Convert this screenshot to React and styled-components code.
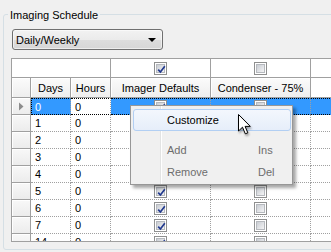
import React from "react";
import styled, { createGlobalStyle } from "styled-components";

const GlobalStyle = createGlobalStyle`
  html, body {
    margin: 0;
    padding: 0;
  }
  body {
    background: #f0f0f0;
    font-family: "Liberation Sans", Arial, sans-serif;
    font-size: 11px;
    color: #000;
    overflow: hidden;
  }
`;

/* ---------- window + group box ---------- */

const Window = styled.div`
  position: relative;
  width: 331px;
  height: 252px;
  overflow: hidden;
  padding-top: 14px;
  box-sizing: border-box;
`;

const GroupBox = styled.section`
  margin-left: 3px;
  width: 360px;
  height: 236px;
  box-sizing: border-box;
  border: 1px solid #d5dfe5;
  border-radius: 3px;
  padding: 0 0 0 8px;
  display: flex;
  flex-direction: column;
  align-items: flex-start;
`;

const GroupTitle = styled.div`
  margin: -7px 0 0 -4px;
  padding: 0 2px;
  line-height: 15px;
  background: #f0f0f0;
  color: #000;
`;

/* ---------- combo box ---------- */

const Combo = styled.div`
  margin-top: 6px;
  width: 151px;
  height: 21px;
  box-sizing: border-box;
  border: 1px solid #707070;
  border-radius: 3px;
  background: linear-gradient(#f2f2f2 0%, #ebebeb 50%, #dddddd 51%, #d6d6d6 100%);
  box-shadow: inset 0 0 0 1px rgba(255, 255, 255, 0.55);
  display: flex;
  align-items: center;
  padding: 0 6px 0 3px;
  justify-content: space-between;
`;

const ComboArrow = styled.span`
  width: 0;
  height: 0;
  border-left: 4px solid transparent;
  border-right: 4px solid transparent;
  border-top: 4px solid #000;
`;

/* ---------- data grid ---------- */

const Grid = styled.div`
  margin: 8px 0 0 -1px;
  width: 330px;
  height: 184px;
  box-sizing: border-box;
  border: 1px solid #a0a0a0;
  background: #fff;
  overflow: hidden;
  display: grid;
  grid-template-columns: 19px 40px 40px 100px 100px 1fr;
  grid-template-rows: 19px 20px repeat(9, 17px);
`;

const TopCell = styled.div`
  grid-column: span ${(p) => p.span || 1};
  background: #fff;
  border-right: 1px solid #a0a0a0;
  border-bottom: 1px solid #a0a0a0;
  display: flex;
  align-items: center;
  justify-content: center;
`;

const HeaderCell = styled.div`
  background: linear-gradient(#fbfbfb, #eeeeee);
  border-right: 1px solid #a0a0a0;
  border-bottom: 1px solid #a0a0a0;
  box-shadow: inset 1px 1px 0 #fff;
  display: flex;
  align-items: center;
  justify-content: center;
  white-space: nowrap;
  ${(p) => p.blank && "background: #fff; box-shadow: none;"}
`;

const RowHeader = styled.div`
  background: linear-gradient(#f8f8f8, #ececec);
  border-right: 1px solid #a0a0a0;
  border-bottom: 1px solid #a0a0a0;
  box-shadow: inset 1px 1px 0 #fff;
  display: flex;
  align-items: center;
  justify-content: center;
`;

const Cell = styled.div`
  box-sizing: border-box;
  background: ${(p) => (p.selected ? "#3399ff" : "#fff")};
  color: ${(p) => (p.selected ? "#fff" : "#000")};
  border-right: 1px dotted #a0a0a0;
  border-bottom: 1px dotted ${(p) => (p.focused ? "#000" : "#a0a0a0")};
  border-top: ${(p) => (p.focused ? "1px dotted #000" : "none")};
  border-left: ${(p) => (p.focusStart ? "1px dotted #000" : "none")};
  display: flex;
  align-items: center;
  justify-content: ${(p) => (p.center ? "center" : "flex-start")};
  padding-left: ${(p) => (p.center ? 0 : p.focusStart ? 3 : 4)}px;
  white-space: nowrap;
`;

const CheckBox = styled.span`
  width: 13px;
  height: 13px;
  box-sizing: border-box;
  border: 1px solid #8e8f8f;
  background: #fff;
  padding: 2px;
  position: relative;
  flex: none;

  &::before {
    content: "";
    display: block;
    width: 7px;
    height: 7px;
    border: 1px solid #b6b9be;
    background: linear-gradient(135deg, #c9cdd3, #f4f4f5);
    box-sizing: content-box;
    margin: -1px;
  }

  svg {
    position: absolute;
    left: 1px;
    top: 1px;
  }
`;

function Check({ checked }) {
  return (
    <CheckBox>
      {checked && (
        <svg width="11" height="11" viewBox="0 0 11 11">
          <path
            d="M2.2 5.6 L4.4 8 L8.8 2.2"
            fill="none"
            stroke="#21398e"
            strokeWidth="1.7"
          />
        </svg>
      )}
    </CheckBox>
  );
}

/* ---------- context menu ---------- */

const Menu = styled.div`
  position: absolute;
  left: 130px;
  top: 105px;
  width: 163px;
  box-sizing: border-box;
  padding: 3px 1px 1px 2px;
  border: 1px solid #979797;
  background:
    linear-gradient(90deg, transparent 29px, #e2e3e3 29px, #e2e3e3 30px, #fff 30px, #fff 31px, transparent 31px),
    #f0f0f0;
  box-shadow: 3px 3px 3px rgba(0, 0, 0, 0.35);
  font-size: 11px;
`;

const MenuItem = styled.div`
  height: 22px;
  box-sizing: border-box;
  display: grid;
  grid-template-columns: 91px auto;
  align-items: center;
  padding-left: 33px;
  border: 1px solid transparent;
  border-radius: 3px;
  color: ${(p) => (p.disabled ? "#6d6d6d" : "#000")};
  ${(p) =>
    p.hover &&
    `
    border-color: #b2cff3;
    background: linear-gradient(#f3f7fd, #e6eefa);
  `}
`;

const MenuGap = styled.div`
  height: 8px;
`;

const Cursor = styled.svg`
  position: absolute;
  left: 238px;
  top: 114px;
  filter: drop-shadow(1px 2px 1px rgba(0, 0, 0, 0.35));
`;

const rows = [0, 1, 2, 3, 4, 5, 6, 7, 14];

export default function App() {
  return (
    <Window>
      <GlobalStyle />
      <GroupBox>
        <GroupTitle>Imaging Schedule</GroupTitle>
        <Combo>
          <span>Daily/Weekly</span>
          <ComboArrow />
        </Combo>
        <Grid>
          <TopCell span={3} />
          <TopCell>
            <Check checked />
          </TopCell>
          <TopCell>
            <Check />
          </TopCell>
          <TopCell />

          <HeaderCell />
          <HeaderCell>Days</HeaderCell>
          <HeaderCell>Hours</HeaderCell>
          <HeaderCell>Imager Defaults</HeaderCell>
          <HeaderCell>Condenser - 75%</HeaderCell>
          <HeaderCell blank />

          {rows.map((day, i) => {
            const sel = i === 0;
            return (
              <React.Fragment key={day}>
                <RowHeader>
                  {sel && (
                    <svg width="6" height="9" viewBox="0 0 6 9">
                      <path d="M1 0.5 L5.5 4.5 L1 8.5 Z" fill="#8c8c8c" />
                    </svg>
                  )}
                </RowHeader>
                <Cell selected={sel} focused={sel} focusStart={sel}>
                  {day}
                </Cell>
                <Cell focused={sel}>0</Cell>
                <Cell selected={sel} focused={sel} center>
                  <Check checked />
                </Cell>
                <Cell selected={sel} focused={sel} center>
                  <Check />
                </Cell>
                <Cell selected={sel} focused={sel} />
              </React.Fragment>
            );
          })}
        </Grid>
      </GroupBox>

      <Menu>
        <MenuItem hover>
          <span>Customize</span>
        </MenuItem>
        <MenuGap />
        <MenuItem disabled>
          <span>Add</span>
          <span>Ins</span>
        </MenuItem>
        <MenuItem disabled>
          <span>Remove</span>
          <span>Del</span>
        </MenuItem>
      </Menu>

      <Cursor width="14" height="22" viewBox="0 0 14 22">
        <path
          d="M0.5 0.5 L0.5 17 L4.5 13.2 L7.3 19.8 L9.8 18.8 L7.1 12.4 L12.3 12.4 Z"
          fill="#fff"
          stroke="#000"
          strokeWidth="1"
          strokeLinejoin="miter"
        />
      </Cursor>
    </Window>
  );
}
